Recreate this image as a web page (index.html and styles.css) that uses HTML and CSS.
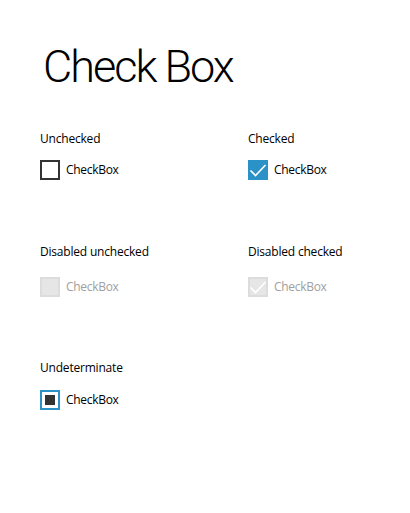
FILE: index.html
```html
<!DOCTYPE html>
<html lang="en">
<head>
    <meta charset="UTF-8">
    <meta name="viewport" content="width=device-width, initial-scale=1.0">
    <title>Check Box</title>
    <link rel="stylesheet" href="styles.css">
</head>
<body>
    <div class="page">
        <h1 class="title">Check Box</h1>

        <div class="grid">
            <div class="cell">
                <div class="caption">Unchecked</div>
                <label class="check">
                    <span class="box"></span>
                    CheckBox
                </label>
            </div>
            <div class="cell">
                <div class="caption">Checked</div>
                <label class="check">
                    <span class="box checked">
                        <svg width="20" height="20" viewBox="0 0 20 20"><path d="M2.5 10.5 L7.5 15.5 L17.5 5" fill="none" stroke="#fff" stroke-width="1.6"/></svg>
                    </span>
                    CheckBox
                </label>
            </div>

            <div class="cell">
                <div class="caption">Disabled unchecked</div>
                <label class="check disabled">
                    <span class="box"></span>
                    CheckBox
                </label>
            </div>
            <div class="cell">
                <div class="caption">Disabled checked</div>
                <label class="check disabled">
                    <span class="box">
                        <svg width="20" height="20" viewBox="0 0 20 20"><path d="M2.5 10.5 L7.5 15.5 L17.5 5" fill="none" stroke="#fff" stroke-width="1.6"/></svg>
                    </span>
                    CheckBox
                </label>
            </div>

            <div class="cell">
                <div class="caption">Undeterminate</div>
                <label class="check">
                    <span class="box mixed"><span class="dot"></span></span>
                    CheckBox
                </label>
            </div>
        </div>
    </div>
</body>
</html>
```

FILE: styles.css
```css
body {
    margin: 0;
    background: #fff;
    color: #000;
    font-family: "Open Sans", "Noto Sans", sans-serif;
}
.page {
    padding: 35px 0 0 40px;
}
.title {
    margin: 0 0 0 3px;
    font-family: Roboto, "Open Sans", sans-serif;
    font-size: 45px;
    font-weight: 300;
    letter-spacing: -2px;
    line-height: 64px;
}
.grid {
    display: grid;
    grid-template-columns: 208px 1fr;
    grid-template-rows: 113px 116px auto;
    margin-top: 32px;
}
.caption {
    font-size: 12px;
    line-height: 16px;
    letter-spacing: -0.2px;
}
.check {
    display: flex;
    align-items: center;
    gap: 6px;
    margin-top: 13px;
    font-size: 12px;
    line-height: 20px;
    letter-spacing: -0.3px;
}
.grid .cell:nth-child(3) .check,
.grid .cell:nth-child(4) .check {
    margin-top: 17px;
}
.grid .cell:nth-child(5) .check {
    margin-top: 14px;
}
.box {
    box-sizing: border-box;
    width: 20px;
    height: 20px;
    border: 2px solid #333;
    background: #fff;
    position: relative;
}
.box svg {
    position: absolute;
    top: -2px;
    left: -2px;
}
.box.checked {
    background: #2b92c8;
    border-color: #2b92c8;
}
.box.mixed {
    border-color: #2b92c8;
    padding: 3px;
}
.box.mixed .dot {
    display: block;
    width: 10px;
    height: 10px;
    background: #333;
}
.check.disabled {
    color: #a0a0a0;
}
.check.disabled .box {
    background: #e6e6e6;
    border-color: #dcdcdc;
}
```
